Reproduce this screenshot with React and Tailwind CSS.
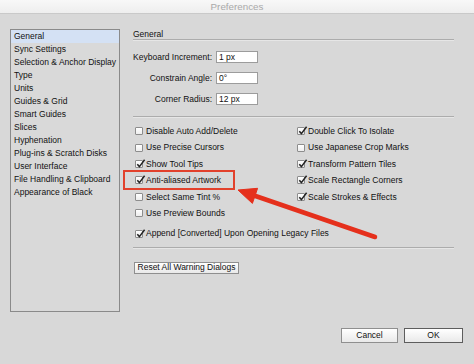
import React from "react";

const sections = [
  "General",
  "Sync Settings",
  "Selection & Anchor Display",
  "Type",
  "Units",
  "Guides & Grid",
  "Smart Guides",
  "Slices",
  "Hyphenation",
  "Plug-ins & Scratch Disks",
  "User Interface",
  "File Handling & Clipboard",
  "Appearance of Black",
];

const fields = [
  { label: "Keyboard Increment:", value: "1 px" },
  { label: "Constrain Angle:", value: "0°" },
  { label: "Corner Radius:", value: "12 px" },
];

// left column, right column (null = empty cell)
const options = [
  [{ label: "Disable Auto Add/Delete", on: false }, { label: "Double Click To Isolate", on: true }],
  [{ label: "Use Precise Cursors", on: false }, { label: "Use Japanese Crop Marks", on: false }],
  [{ label: "Show Tool Tips", on: true }, { label: "Transform Pattern Tiles", on: true }],
  [{ label: "Anti-aliased Artwork", on: true }, { label: "Scale Rectangle Corners", on: true }],
  [{ label: "Select Same Tint %", on: false }, { label: "Scale Strokes & Effects", on: true }],
  [{ label: "Use Preview Bounds", on: false }, null],
];

function Checkbox({ on }) {
  return (
    <span className="relative w-[8px] h-[8px] shrink-0 border border-[#8d8d8d] bg-gradient-to-b from-white to-[#ededed] rounded-[1px]">
      {on && (
        <svg className="absolute left-[0px] top-[-2px]" width="10" height="10" viewBox="0 0 10 10">
          <path d="M1.3 5.2 L3.4 7.6 L8.6 0.8" fill="none" stroke="#222" strokeWidth="1.5" />
        </svg>
      )}
    </span>
  );
}

function Option({ label, on }) {
  return (
    <div className="flex items-center gap-[3px] h-[16.4px]">
      <Checkbox on={on} />
      <span>{label}</span>
    </div>
  );
}

function Groove() {
  return (
    <div>
      <div className="h-px bg-[#acacac]" />
      <div className="h-px bg-[#e6e6e6]" />
    </div>
  );
}

function Button({ children, primary, className }) {
  return (
    <div
      className={
        "flex items-center justify-center bg-gradient-to-b from-white to-[#e9e9e9] " +
        (primary ? "border-[1.5px] border-[#5d5d5d] " : "border border-[#8f8f8f] ") +
        className
      }
    >
      {children}
    </div>
  );
}

export default function App() {
  return (
    <div
      className="relative w-[474px] h-[364px] overflow-hidden bg-[#d8d8d8] text-[8.5px] leading-none text-[#111]"
      style={{ fontFamily: '"Liberation Sans", Arial, sans-serif' }}
    >
      {/* title bar */}
      <div className="h-[14px] flex items-center justify-center bg-gradient-to-b from-[#f8f8f8] to-[#eeeeee] border-b border-[#c9c9c9] text-[9.8px] text-[#a9a9a9]">
        Preferences
      </div>

      <div className="flex h-[298px]">
        {/* section list */}
        <div className="ml-[10px] mt-[15px] w-[110px] h-[283px] border border-[#8a8a8a] bg-[#d9d9d9]">
          {sections.map((s, i) => (
            <div
              key={s}
              className={"h-[13px] flex items-center pl-[3px] " + (i === 0 ? "bg-[#d4e1f4]" : "")}
            >
              {s}
            </div>
          ))}
        </div>

        {/* general panel */}
        <div className="ml-[13px] w-[321px] pt-[15px]">
          <div className="h-[10px] flex items-center">General</div>
          <Groove />

          <div className="mt-[10px] flex flex-col gap-[9px]">
            {fields.map((f) => (
              <div key={f.label} className="flex items-center h-[12px]">
                <span className="w-[79px] text-right">{f.label}</span>
                <div className="ml-[4px] w-[42px] h-[12px] bg-white border border-[#9c9c9c] flex items-center pl-[2px]">
                  {f.value}
                </div>
              </div>
            ))}
          </div>

          <div className="mt-[11px]">
            <Groove />
          </div>

          <div className="mt-[5px] pl-[2px] grid grid-cols-[162px_1fr]">
            {options.map((row, i) => (
              <React.Fragment key={i}>
                <Option {...row[0]} />
                {row[1] ? <Option {...row[1]} /> : <div />}
              </React.Fragment>
            ))}
          </div>

          <div className="mt-[4px] pl-[2px]">
            <Option label="Append [Converted] Upon Opening Legacy Files" on />
          </div>

          <div className="mt-[5px]">
            <Groove />
          </div>

          <Button className="mt-[13px] ml-[1px] w-[105px] h-[12px]">Reset All Warning Dialogs</Button>
        </div>
      </div>

      {/* dialog buttons */}
      <div className="mt-[16px] flex justify-end gap-[6px] pr-[11px]">
        <Button className="w-[57px] h-[15px]">Cancel</Button>
        <Button primary className="w-[59px] h-[15px]">OK</Button>
      </div>

      {/* annotation */}
      <div className="absolute left-[123px] top-[170px] w-[112px] h-[20px] border-2 border-[#e2412c]" />
      <svg className="absolute left-0 top-0" width="474" height="364" viewBox="0 0 474 364">
        <line x1="254" y1="195.5" x2="375" y2="237" stroke="#e5301c" strokeWidth="4.5" strokeLinecap="round" />
        <polygon points="238,190 252.4,203.4 257.6,188.3" fill="#e5301c" strokeLinejoin="round" stroke="#e5301c" strokeWidth="1" />
      </svg>
    </div>
  );
}
